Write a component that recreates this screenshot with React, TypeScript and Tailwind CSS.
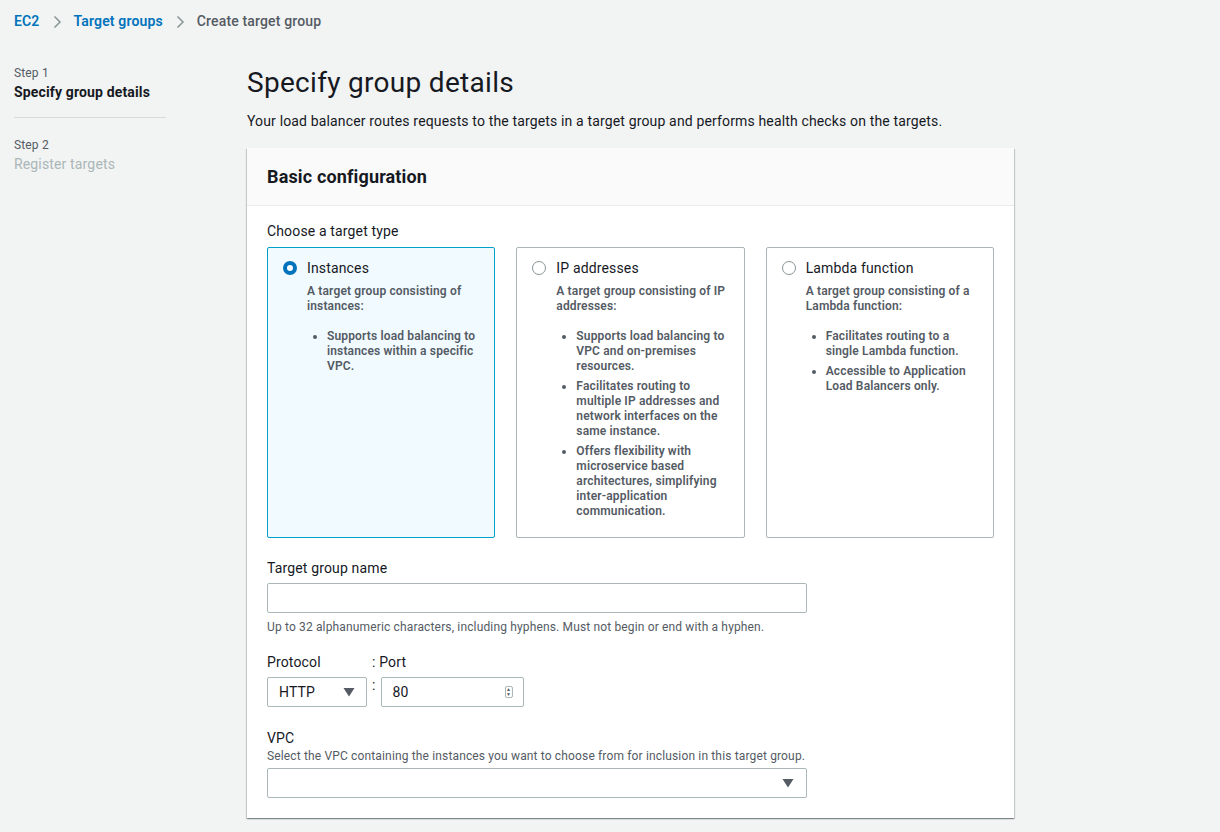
import React from "react";

const FONT = { fontFamily: "Roboto, 'Liberation Sans', sans-serif" };

const Chevron = () => (
  <svg width="16" height="16" viewBox="0 0 16 16" className="mx-[9px] text-[#879596]">
    <path d="M5.5 2.5l5.5 5.5-5.5 5.5" fill="none" stroke="currentColor" strokeWidth="1.5" />
  </svg>
);

const Caret = () => (
  <svg width="12" height="10" viewBox="0 0 12 10" className="text-[#545b64]">
    <path d="M0.5 1h11L6 9.5z" fill="currentColor" />
  </svg>
);

const Breadcrumbs = () => (
  <nav className="flex items-center px-[14px] pt-[11px] h-[32px] text-[14px]">
    <a className="text-[#0073bb] font-semibold">EC2</a>
    <Chevron />
    <a className="text-[#0073bb] font-semibold">Target groups</a>
    <Chevron />
    <span className="text-[#545b64] font-medium">Create target group</span>
  </nav>
);

const Steps = () => (
  <aside className="w-[152px] ml-[14px] mr-[81px] pt-[33px] shrink-0">
    <div className="text-[12px] leading-[16px] text-[#545b64]">Step 1</div>
    <div className="text-[14px] leading-[22px] font-bold text-[#16191f]">Specify group details</div>
    <div className="border-t border-[#d5dbdb] mt-[14px] mb-[19px]" />
    <div className="text-[12px] leading-[16px] text-[#545b64]">Step 2</div>
    <div className="text-[14px] leading-[22px] text-[#aab7b8]">Register targets</div>
  </aside>
);

type Tile = { title: string; desc: string; bullets: string[]; selected?: boolean };

const tiles: Tile[] = [
  {
    title: "Instances",
    desc: "A target group consisting of instances:",
    bullets: ["Supports load balancing to instances within a specific VPC."],
    selected: true,
  },
  {
    title: "IP addresses",
    desc: "A target group consisting of IP addresses:",
    bullets: [
      "Supports load balancing to VPC and on-premises resources.",
      "Facilitates routing to multiple IP addresses and network interfaces on the same instance.",
      "Offers flexibility with microservice based architectures, simplifying inter-application communication.",
    ],
  },
  {
    title: "Lambda function",
    desc: "A target group consisting of a Lambda function:",
    bullets: ["Facilitates routing to a single Lambda function.", "Accessible to Application Load Balancers only."],
  },
];

const TargetTile = ({ tile }: { tile: Tile }) => (
  <div
    className={`flex-1 border rounded-[2px] pl-[15px] pr-[18px] pt-[10px] ${
      tile.selected ? "bg-[#f1faff] border-[#00a1c9]" : "bg-white border-[#aab7b8]"
    }`}
  >
    <div className="flex items-center h-[20px]">
      {tile.selected ? (
        <span className="w-[14px] h-[14px] rounded-full border-[4px] border-[#0073bb] bg-white mr-[10px]" />
      ) : (
        <span className="w-[14px] h-[14px] rounded-full border border-[#879596] bg-white mr-[10px]" />
      )}
      <span className="text-[14px] text-[#16191f]">{tile.title}</span>
    </div>
    <div className="pl-[24px] mt-[6px] text-[12px] leading-[15px] font-semibold text-[#545b64]">
      <p>{tile.desc}</p>
      <ul className="mt-[15px] pl-[20px] list-disc space-y-[5px]">
        {tile.bullets.map((b) => (
          <li key={b}>{b}</li>
        ))}
      </ul>
    </div>
  </div>
);

export default function App() {
  return (
    <div className="min-h-screen bg-[#f2f3f3] text-[#16191f] tracking-[0.15px]" style={FONT}>
      <Breadcrumbs />
      <div className="flex">
        <Steps />
        <main className="w-[767px]">
          <h1 className="text-[28px] leading-[36px] font-normal mt-[33px] tracking-[0.3px]">Specify group details</h1>
          <p className="text-[14px] leading-[20px] mt-[10px] text-[#16191f]">
            Your load balancer routes requests to the targets in a target group and performs health checks on the targets.
          </p>
          <section className="mt-[17px] bg-white shadow-[0_1px_1px_0_rgba(0,28,36,0.3),1px_1px_1px_0_rgba(0,28,36,0.15),-1px_1px_1px_0_rgba(0,28,36,0.15)]">
            <header className="h-[58px] bg-[#fafafa] border-b border-[#eaeded] px-[20px] flex items-center">
              <h2 className="text-[18px] font-bold">Basic configuration</h2>
            </header>
            <div className="px-[20px] pt-[15px] pb-[20px]">
              <div className="text-[14px] leading-[20px] mb-[6px]">Choose a target type</div>
              <div className="flex gap-[21px] h-[291px]">
                {tiles.map((t) => (
                  <TargetTile key={t.title} tile={t} />
                ))}
              </div>

              <div className="mt-[20px] w-[540px]">
                <div className="text-[14px] leading-[20px] mb-[5px]">Target group name</div>
                <div className="h-[30px] border border-[#aab7b8] rounded-[2px] bg-white" />
                <div className="text-[12px] leading-[16px] text-[#545b64] mt-[6px]">
                  Up to 32 alphanumeric characters, including hyphens. Must not begin or end with a hyphen.
                </div>
              </div>

              <div className="mt-[17px] flex">
                <div className="w-[100px]">
                  <div className="text-[14px] leading-[20px] mb-[5px] whitespace-nowrap">Protocol</div>
                  <div className="h-[30px] border border-[#aab7b8] rounded-[2px] bg-white flex items-center justify-between pl-[11px] pr-[11px] text-[14px]">
                    <span>HTTP</span>
                    <Caret />
                  </div>
                </div>
                <div className="ml-[5px]">
                  <div className="text-[14px] leading-[20px] mb-[5px]">: Port</div>
                  <div className="flex">
                    <span className="text-[14px] leading-[20px] mr-[5px] -mt-[2px]">:</span>
                    <div className="w-[143px] h-[30px] border border-[#aab7b8] rounded-[2px] bg-white flex items-center justify-between pl-[11px] pr-[10px] text-[14px]">
                      <span>80</span>
                      <span className="w-[8px] h-[12px] border border-[#aab7b8] rounded-[2px] flex flex-col items-center justify-center text-[5px] leading-[5px] text-[#545b64]">
                        <span>▲</span>
                        <span>▼</span>
                      </span>
                    </div>
                  </div>
                </div>
              </div>

              <div className="mt-[21px] w-[540px]">
                <div className="text-[14px] leading-[20px]">VPC</div>
                <div className="text-[12px] leading-[16px] text-[#545b64] mb-[4px]">
                  Select the VPC containing the instances you want to choose from for inclusion in this target group.
                </div>
                <div className="h-[30px] border border-[#aab7b8] rounded-[2px] bg-white flex items-center justify-end pr-[12px]">
                  <Caret />
                </div>
              </div>
            </div>
          </section>
        </main>
      </div>
    </div>
  );
}
